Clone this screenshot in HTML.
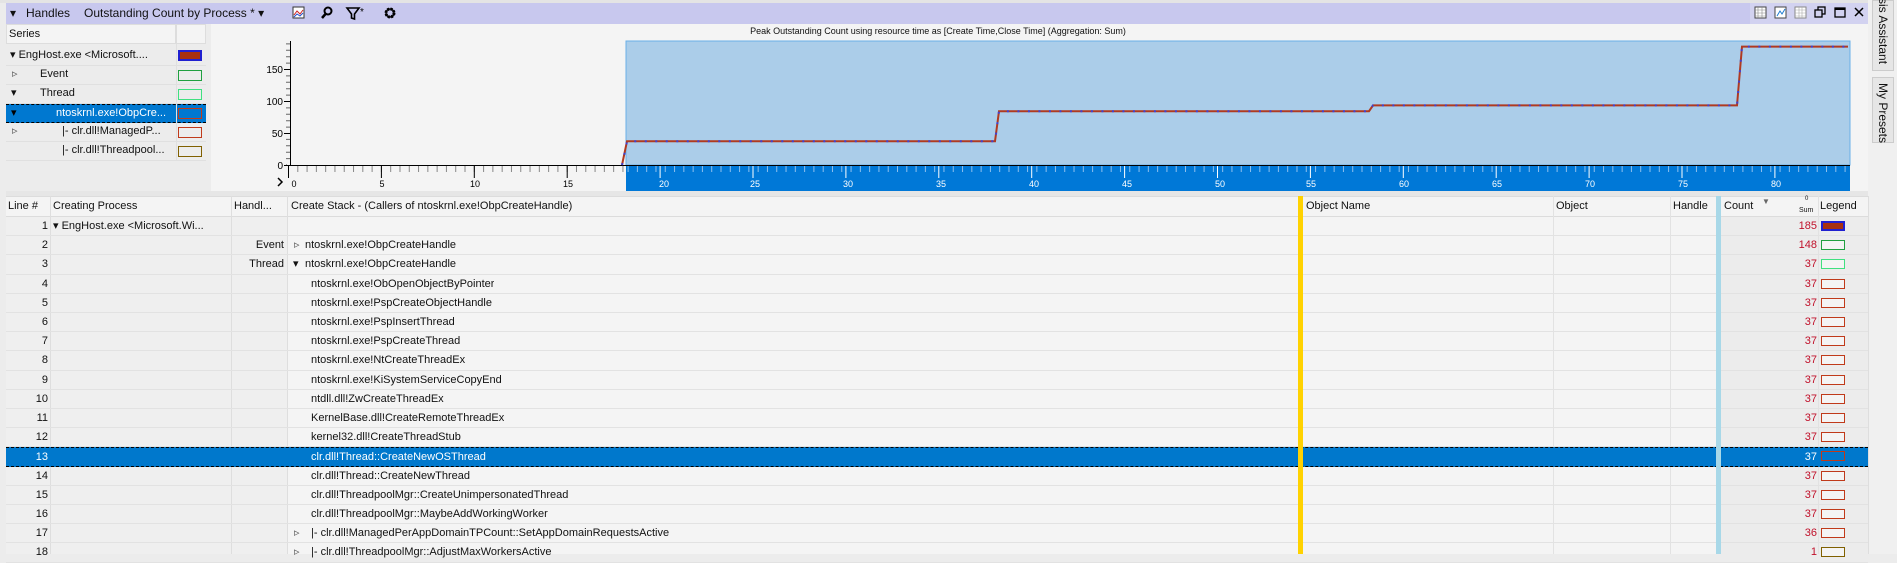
<!DOCTYPE html>
<html><head><meta charset="utf-8">
<style>
*{margin:0;padding:0;box-sizing:border-box}
body{width:1897px;height:554px;overflow:hidden;background:#ececec;font-family:"Liberation Sans",sans-serif;font-size:11px;color:#111;position:relative}
.a{position:absolute}
.t{position:absolute;white-space:nowrap;line-height:19px}
.row{position:absolute;left:6px;width:1862px;height:19.2px;border-bottom:1px solid #e2e2e2}
.c{position:absolute;top:0;height:100%;line-height:18px;white-space:nowrap;overflow:hidden}
.num{right:0;text-align:right}
.lg{position:absolute;width:24px;height:10px;border:1px solid #c03a1a;top:4px;left:1815px;background:#f4f4f4}
.cnt{position:absolute;left:1716px;width:95px;text-align:right;line-height:18px;color:#c0102a}
</style></head><body>
<!-- top strip -->
<div class="a" style="left:0;top:0;width:1897px;height:3px;background:#e4e4e4"></div>
<!-- toolbar -->
<div class="a" style="left:6px;top:3px;width:1862px;height:21px;background:#c8c8ee"></div>
<div class="a" style="left:1750px;top:3px;width:118px;height:21px;background:#d2d2f0"></div>
<div class="t" style="left:10px;top:3px;font-size:12px;line-height:21px">▾</div>
<div class="t" style="left:26px;top:3px;font-size:12px;line-height:21px">Handles</div>
<div class="t" style="left:84px;top:3px;font-size:12px;line-height:21px">Outstanding Count by Process * ▾</div>
<svg class="a" style="left:290px;top:5px" width="112" height="17">
<rect x="3" y="2" width="11" height="11" fill="#fff" stroke="#333"/>
<path d="M4 10 L7 6 L10 9 L13 5" stroke="#d02020" fill="none"/><path d="M4 12 L7 9 L10 11 L13 8" stroke="#2050d0" fill="none"/>
<circle cx="38" cy="6" r="3.5" stroke="#000" stroke-width="2" fill="none"/><path d="M35.5 9 L32 13" stroke="#000" stroke-width="2.5"/>
<path d="M57 3 L69 3 L64.5 9 L64.5 14 L61.5 13 L61.5 9 Z" stroke="#000" stroke-width="1.6" fill="none"/>
<text x="70" y="10" font-size="10" font-family="Liberation Sans">*</text>
<circle cx="100" cy="8" r="4" stroke="#000" stroke-width="3" fill="none" stroke-dasharray="2 1.2"/><circle cx="100" cy="8" r="4" stroke="#000" stroke-width="1.5" fill="none"/>
</svg>
<svg class="a" style="left:1750px;top:5px" width="118" height="17">
<rect x="5" y="2" width="11" height="11" fill="#fff" stroke="#444"/><path d="M5 5H16M5 8H16M5 11H16M8 2V13M12 2V13" stroke="#888" stroke-width=".6"/>
<rect x="25" y="2" width="11" height="11" fill="#fff" stroke="#444"/><path d="M27 11 L30 6 L32 9 L35 4" stroke="#1a7ad0" fill="none"/>
<rect x="45" y="2" width="11" height="11" fill="#fff" stroke="#888"/><path d="M45 5H56M45 8H56M45 11H56M49 2V13M52 2V13" stroke="#aaa" stroke-width=".6"/>
<rect x="68" y="2" width="7" height="7" fill="none" stroke="#000" stroke-width="1.3"/><rect x="65" y="5" width="7" height="7" fill="#d2d2f0" stroke="#000" stroke-width="1.3"/>
<rect x="85" y="3" width="10" height="9" fill="none" stroke="#000" stroke-width="1.3"/><path d="M85 4H95" stroke="#000" stroke-width="2"/>
<path d="M105 3L113 11M113 3L105 11" stroke="#000" stroke-width="1.5"/>
</svg>
<!-- side tabs -->
<div class="a" style="left:1868px;top:0;width:29px;height:554px;background:#f0f0f0"></div>
<div class="a" style="left:1872px;top:0;width:22px;height:71px;background:#e6e6e6;border:1px solid #ccc"></div>
<div class="a" style="left:1872px;top:77px;width:22px;height:66px;background:#e6e6e6;border:1px solid #ccc"></div>
<div class="t" style="left:1876px;top:-2px;writing-mode:vertical-rl;font-size:12px;line-height:14px">sis Assistant</div>
<div class="t" style="left:1876px;top:83px;writing-mode:vertical-rl;font-size:12px;line-height:14px">My Presets</div>

<!-- series panel -->
<div class="a" style="left:6px;top:24px;width:200px;height:167px;background:#ececec"></div>
<div class="a" style="left:6px;top:24px;width:170px;height:20px;background:#f4f4f4;border:1px solid #ddd"></div>
<div class="a" style="left:176px;top:24px;width:30px;height:20px;background:#f4f4f4;border:1px solid #ddd"></div>
<div class="t" style="left:9px;top:25px;font-size:11px">Series</div>
<div class="a" style="left:6px;top:47px;width:200px;height:19px;border-bottom:1px solid #e0e0e0"></div>
<div class="t" style="left:10px;top:46px">▾ EngHost.exe &lt;Microsoft....</div>
<div class="a" style="left:178px;top:50px;width:24px;height:11px;background:#a83010;border:2px solid #2020d0"></div>
<div class="a" style="left:6px;top:66px;width:200px;height:19px;border-bottom:1px solid #e0e0e0"></div>
<div class="t" style="left:12px;top:65px;color:#555">▹</div><div class="t" style="left:40px;top:65px">Event</div>
<div class="a" style="left:178px;top:70px;width:24px;height:11px;border:1px solid #20a040"></div>
<div class="a" style="left:6px;top:85px;width:200px;height:19px;border-bottom:1px solid #e0e0e0"></div>
<div class="t" style="left:11px;top:84px">▾</div><div class="t" style="left:40px;top:84px">Thread</div>
<div class="a" style="left:178px;top:89px;width:24px;height:11px;border:1px solid #40e080"></div>
<div class="a" style="left:6px;top:104px;width:200px;height:19px;background:#0078d0;border-top:1px dashed #000;border-bottom:1px dashed #000"></div>
<div class="a" style="left:176px;top:104px;width:1px;height:19px;background:#6aa8e0"></div>
<div class="t" style="left:11px;top:104px;color:#000">▾</div><div class="t" style="left:56px;top:104px;color:#fff">ntoskrnl.exe!ObpCre...</div>
<div class="a" style="left:178px;top:108px;width:24px;height:11px;border:1px solid #c03a1a"></div>
<div class="a" style="left:6px;top:123px;width:200px;height:19px;border-bottom:1px solid #e0e0e0"></div>
<div class="t" style="left:12px;top:122px;color:#555">▹</div><div class="t" style="left:62px;top:122px">|- clr.dll!ManagedP...</div>
<div class="a" style="left:178px;top:127px;width:24px;height:11px;border:1px solid #c03a1a"></div>
<div class="a" style="left:6px;top:142px;width:200px;height:19px;border-bottom:1px solid #e0e0e0"></div>
<div class="t" style="left:62px;top:141px">|- clr.dll!Threadpool...</div>
<div class="a" style="left:178px;top:146px;width:24px;height:11px;border:1px solid #806000"></div>
<div class="a" style="left:176px;top:44px;width:1px;height:117px;background:#e0e0e0"></div>

<!-- chart -->
<div class="a" style="left:211px;top:24px;width:1657px;height:167px;background:#f4f4f4"></div>
<div class="t" style="left:638px;top:22px;width:600px;text-align:center;font-size:9px">Peak Outstanding Count using resource time as [Create Time,Close Time] (Aggregation: Sum)</div>
<svg class="a" style="left:0;top:0" width="1868" height="192">
<rect x="626" y="41" width="1224" height="124" fill="#abcde9"/>
<rect x="626" y="41" width="1224" height="124" fill="none" stroke="#6ab0e8" stroke-width="1"/>
<rect x="626" y="166" width="1224" height="25" fill="#0078d7"/>
<!-- y axis -->
<line x1="290.5" y1="41" x2="290.5" y2="166" stroke="#000"/>
<line x1="286" y1="165" x2="290" y2="165" stroke="#555" stroke-dasharray="1 5.4"/>
<line x1="286" y1="165.5" x2="286" y2="165.5"/>
<path d="M284 165.5H290M284 133.5H290M284 101.5H290M284 69.5H290" stroke="#000"/>
<line x1="287" y1="45" x2="287" y2="165" stroke="#777" stroke-width="7" stroke-dasharray="1 5.4" transform="translate(0,0)" style="display:none"/>
<path d="M286 158.6H290M286 152.2H290M286 145.8H290M286 139.4H290M286 127.1H290M286 120.7H290M286 114.3H290M286 107.9H290M286 95.1H290M286 88.7H290M286 82.3H290M286 75.9H290M286 63.1H290M286 56.7H290M286 50.3H290M286 43.9H290" stroke="#666"/>
<g font-family="Liberation Sans" font-size="10" text-anchor="end" fill="#000">
<text x="283" y="169">0</text><text x="283" y="137">50</text><text x="283" y="105">100</text><text x="283" y="73">150</text></g>
<!-- x axis -->
<line x1="290" y1="165.5" x2="1850" y2="165.5" stroke="#000"/>
<line x1="288" y1="169" x2="626" y2="169" stroke="#888" stroke-width="6" stroke-dasharray="1 8.29"/>
<line x1="627.6" y1="169" x2="1850" y2="169" stroke="#8ec0ee" stroke-width="6" stroke-dasharray="1 8.29"/>
<path d="M288.5 166V178M381.4 166V178M474.3 166V178M567.2 166V178" stroke="#000"/>
<path d="M660.1 166V178M753 166V178M845.9 166V178M938.8 166V178M1031.7 166V178M1124.6 166V178M1217.5 166V178M1310.4 166V178M1403.3 166V178M1496.2 166V178M1589.1 166V178M1682 166V178M1774.9 166V178" stroke="#fff"/>
<g font-family="Liberation Sans" font-size="9" text-anchor="middle" fill="#000">
<text x="294" y="187">0</text><text x="382" y="187">5</text><text x="475" y="187">10</text><text x="568" y="187">15</text></g>
<g font-family="Liberation Sans" font-size="9" text-anchor="middle" fill="#fff">
<text x="664" y="187">20</text><text x="755" y="187">25</text><text x="848" y="187">30</text><text x="941" y="187">35</text><text x="1034" y="187">40</text><text x="1127" y="187">45</text><text x="1220" y="187">50</text><text x="1311" y="187">55</text><text x="1404" y="187">60</text><text x="1497" y="187">65</text><text x="1590" y="187">70</text><text x="1683" y="187">75</text><text x="1776" y="187">80</text></g>
<path d="M278 178 L282 182 L278 186" stroke="#000" stroke-width="1.5" fill="none"/>
<!-- data -->
<path d="M622 165 L627 141.3 L995 141.3 L999 111.2 L1369 111.2 L1373 105.4 L1737 105.4 L1742 46.6 L1848 46.6" stroke="#b03a20" stroke-width="2" fill="none"/>
<path d="M622 165 L627 141.3 L995 141.3 L999 111.2 L1369 111.2 L1373 105.4 L1737 105.4 L1742 46.6 L1848 46.6" stroke="#4040d0" stroke-width="2" fill="none" stroke-dasharray="2 8.5"/>
</svg>

<!-- separator -->
<div class="a" style="left:6px;top:191px;width:1862px;height:5px;background:#e6e6e6"></div>

<!-- table -->
<div class="a" style="left:6px;top:196px;width:1862px;height:358px;background:#f4f4f4"></div>
<div class="a" style="left:6px;top:217px;width:281px;height:337px;background:#efefef"></div>
<div class="a" style="left:1721px;top:217px;width:147px;height:337px;background:#ececec"></div>
<!-- header -->
<div class="a" style="left:6px;top:196px;width:1862px;height:21px;background:#f4f4f4;border-bottom:1px solid #dcdcdc;border-top:1px solid #dcdcdc"></div>
<div class="t" style="left:8px;top:197px">Line #</div>
<div class="t" style="left:53px;top:197px">Creating Process</div>
<div class="t" style="left:234px;top:197px">Handl...</div>
<div class="t" style="left:291px;top:197px">Create Stack - (Callers of ntoskrnl.exe!ObpCreateHandle)</div>
<div class="t" style="left:1306px;top:197px">Object Name</div>
<div class="t" style="left:1556px;top:197px">Object</div>
<div class="t" style="left:1673px;top:197px">Handle</div>
<div class="t" style="left:1724px;top:197px">Count</div>
<div class="t" style="left:1762px;top:192px;font-size:8px;color:#666">▼</div>
<div class="t" style="left:1805px;top:190px;font-size:6px">0</div>
<div class="t" style="left:1799px;top:201px;font-size:7px">Sum</div>
<div class="t" style="left:1820px;top:197px">Legend</div>
<!-- column lines -->
<div class="a" style="left:50px;top:196px;width:1px;height:358px;background:#dedede"></div>
<div class="a" style="left:231px;top:196px;width:1px;height:358px;background:#dedede"></div>
<div class="a" style="left:287px;top:196px;width:1px;height:358px;background:#dedede"></div>
<div class="a" style="left:1553px;top:196px;width:1px;height:358px;background:#e2e2e2"></div>
<div class="a" style="left:1670px;top:196px;width:1px;height:358px;background:#e2e2e2"></div>
<div class="a" style="left:1818px;top:196px;width:1px;height:358px;background:#e2e2e2"></div>
<div class="a" style="left:1868px;top:196px;width:1px;height:358px;background:#dedede"></div>

<div id="rows">
<div class="row" style="top:217px"><span class="c" style="left:0;width:42px;text-align:right">1</span><span class="c" style="left:47px">▾ EngHost.exe &lt;Microsoft.Wi...</span><span class="cnt">185</span><span class="lg" style="background:#a83010;border:2px solid #2020d0"></span></div>
<div class="row" style="top:236.2px"><span class="c" style="left:0;width:42px;text-align:right">2</span><span class="c" style="left:190px;width:88px;text-align:right">Event</span><span class="c" style="left:288px;color:#555">▹</span><span class="c" style="left:299px">ntoskrnl.exe!ObpCreateHandle</span><span class="cnt">148</span><span class="lg" style="border-color:#20a040"></span></div>
<div class="row" style="top:255.4px"><span class="c" style="left:0;width:42px;text-align:right">3</span><span class="c" style="left:190px;width:88px;text-align:right">Thread</span><span class="c" style="left:287px">▾</span><span class="c" style="left:299px">ntoskrnl.exe!ObpCreateHandle</span><span class="cnt">37</span><span class="lg" style="border-color:#40e080"></span></div>
<div class="row" style="top:274.6px"><span class="c" style="left:0;width:42px;text-align:right">4</span><span class="c" style="left:305px">ntoskrnl.exe!ObOpenObjectByPointer</span><span class="cnt">37</span><span class="lg"></span></div>
<div class="row" style="top:293.8px"><span class="c" style="left:0;width:42px;text-align:right">5</span><span class="c" style="left:305px">ntoskrnl.exe!PspCreateObjectHandle</span><span class="cnt">37</span><span class="lg"></span></div>
<div class="row" style="top:313px"><span class="c" style="left:0;width:42px;text-align:right">6</span><span class="c" style="left:305px">ntoskrnl.exe!PspInsertThread</span><span class="cnt">37</span><span class="lg"></span></div>
<div class="row" style="top:332.2px"><span class="c" style="left:0;width:42px;text-align:right">7</span><span class="c" style="left:305px">ntoskrnl.exe!PspCreateThread</span><span class="cnt">37</span><span class="lg"></span></div>
<div class="row" style="top:351.4px"><span class="c" style="left:0;width:42px;text-align:right">8</span><span class="c" style="left:305px">ntoskrnl.exe!NtCreateThreadEx</span><span class="cnt">37</span><span class="lg"></span></div>
<div class="row" style="top:370.6px"><span class="c" style="left:0;width:42px;text-align:right">9</span><span class="c" style="left:305px">ntoskrnl.exe!KiSystemServiceCopyEnd</span><span class="cnt">37</span><span class="lg"></span></div>
<div class="row" style="top:389.8px"><span class="c" style="left:0;width:42px;text-align:right">10</span><span class="c" style="left:305px">ntdll.dll!ZwCreateThreadEx</span><span class="cnt">37</span><span class="lg"></span></div>
<div class="row" style="top:409px"><span class="c" style="left:0;width:42px;text-align:right">11</span><span class="c" style="left:305px">KernelBase.dll!CreateRemoteThreadEx</span><span class="cnt">37</span><span class="lg"></span></div>
<div class="row" style="top:428.2px"><span class="c" style="left:0;width:42px;text-align:right">12</span><span class="c" style="left:305px">kernel32.dll!CreateThreadStub</span><span class="cnt">37</span><span class="lg"></span></div>
<div class="row" style="top:447.4px;background:#0078cc;color:#fff;border-top:1px dashed #000;border-bottom:1px dashed #000"><span class="c" style="left:0;width:42px;text-align:right">13</span><span class="c" style="left:305px">clr.dll!Thread::CreateNewOSThread</span><span class="cnt" style="color:#fff">37</span><span class="lg" style="background:#0078cc;top:3px"></span></div>
<div class="row" style="top:466.6px"><span class="c" style="left:0;width:42px;text-align:right">14</span><span class="c" style="left:305px">clr.dll!Thread::CreateNewThread</span><span class="cnt">37</span><span class="lg"></span></div>
<div class="row" style="top:485.8px"><span class="c" style="left:0;width:42px;text-align:right">15</span><span class="c" style="left:305px">clr.dll!ThreadpoolMgr::CreateUnimpersonatedThread</span><span class="cnt">37</span><span class="lg"></span></div>
<div class="row" style="top:505px"><span class="c" style="left:0;width:42px;text-align:right">16</span><span class="c" style="left:305px">clr.dll!ThreadpoolMgr::MaybeAddWorkingWorker</span><span class="cnt">37</span><span class="lg"></span></div>
<div class="row" style="top:524.2px"><span class="c" style="left:0;width:42px;text-align:right">17</span><span class="c" style="left:288px;color:#555">▹</span><span class="c" style="left:305px">|- clr.dll!ManagedPerAppDomainTPCount::SetAppDomainRequestsActive</span><span class="cnt">36</span><span class="lg"></span></div>
<div class="row" style="top:543.4px"><span class="c" style="left:0;width:42px;text-align:right">18</span><span class="c" style="left:288px;color:#555">▹</span><span class="c" style="left:305px">|- clr.dll!ThreadpoolMgr::AdjustMaxWorkersActive</span><span class="cnt">1</span><span class="lg" style="border-color:#806000"></span></div>
</div>
<!-- colored splitter bars -->
<div class="a" style="left:1298px;top:196px;width:5px;height:358px;background:#ffd200"></div>
<div class="a" style="left:1716px;top:196px;width:5px;height:358px;background:#a8d8e8"></div>
</body></html>
